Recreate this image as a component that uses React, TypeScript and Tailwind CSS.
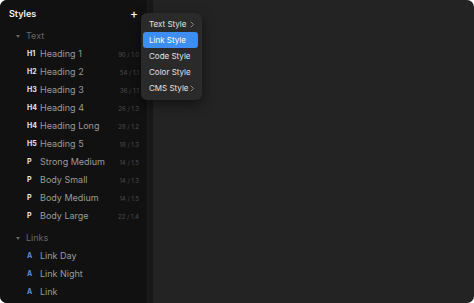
import React from 'react';

type StyleRow = { tag: string; name: string; meta?: string };

const textStyles: StyleRow[] = [
    { tag: 'H1', name: 'Heading 1', meta: '90 / 1.0' },
    { tag: 'H2', name: 'Heading 2', meta: '54 / 1.1' },
    { tag: 'H3', name: 'Heading 3', meta: '36 / 1.1' },
    { tag: 'H4', name: 'Heading 4', meta: '26 / 1.3' },
    { tag: 'H4', name: 'Heading Long', meta: '28 / 1.2' },
    { tag: 'H5', name: 'Heading 5', meta: '18 / 1.3' },
    { tag: 'P', name: 'Strong Medium', meta: '14 / 1.5' },
    { tag: 'P', name: 'Body Small', meta: '14 / 1.3' },
    { tag: 'P', name: 'Body Medium', meta: '14 / 1.5' },
    { tag: 'P', name: 'Body Large', meta: '22 / 1.4' },
];

const linkStyles: StyleRow[] = [
    { tag: 'A', name: 'Link Day' },
    { tag: 'A', name: 'Link Night' },
    { tag: 'A', name: 'Link' },
];

const menuItems = [
    { label: 'Text Style', sub: true },
    { label: 'Link Style', active: true },
    { label: 'Code Style' },
    { label: 'Color Style' },
    { label: 'CMS Style', sub: true },
];

function Chevron() {
    return (
        <svg width="6" height="7" viewBox="0 0 6 7" fill="none">
            <path d="M2 1l2.5 2.5L2 6" stroke="#8a8a8a" strokeWidth="1" strokeLinecap="round" />
        </svg>
    );
}

function SectionHeader({ label }: { label: string }) {
    return (
        <div className="flex h-[18px] items-center gap-[6px] pl-[16px]">
            <span className="h-0 w-0 border-x-[2px] border-t-[3px] border-x-transparent border-t-[#666]" />
            <span className="text-[9px] text-[#666]">{label}</span>
        </div>
    );
}

function Row({ row, link }: { row: StyleRow; link?: boolean }) {
    return (
        <div className="flex h-[18px] items-center pl-[27px] pr-[8px]">
            <span
                className={`w-[13px] text-[7px] font-bold ${link ? 'text-[#5b8fd6]' : 'text-[#e8e8e8]'}`}
            >
                {row.tag}
            </span>
            <span className="flex-1 text-[9px] text-[#9a9a9a]">{row.name}</span>
            {row.meta && <span className="text-[6px] text-[#4c4c4c]">{row.meta}</span>}
        </div>
    );
}

export default function App() {
    return (
        <div className="h-[303px] w-[474px] bg-white" style={{ fontFamily: 'Inter, "Noto Sans", sans-serif' }}>
            <div className="relative flex h-full w-full overflow-hidden rounded-[7px] bg-[#232323]">
                <aside className="flex w-[147px] flex-col bg-[#111111]">
                    <div className="flex h-[27px] items-center justify-between pl-[9px] pr-[9px]">
                        <span className="text-[9px] font-semibold text-[#f2f2f2]">Styles</span>
                        <span className="text-[12px] font-medium leading-none text-white">+</span>
                    </div>
                    <SectionHeader label="Text" />
                    {textStyles.map((r, i) => (
                        <Row key={i} row={r} />
                    ))}
                    <div className="h-[4px]" />
                    <SectionHeader label="Links" />
                    {linkStyles.map((r, i) => (
                        <Row key={i} row={r} link />
                    ))}
                </aside>
                <div className="w-[6px] border-l border-[#1c1c1c] bg-[#181818]" />
                <main className="flex-1" />

                <div className="absolute left-[141px] top-[13px] flex w-[61px] flex-col rounded-[6px] bg-[#2a2a2a] pb-[4px] pl-[2px] pr-[4px] pt-[3px] shadow-[0_4px_12px_rgba(0,0,0,0.5)]">
                    {menuItems.map((m) => (
                        <div
                            key={m.label}
                            className={`flex h-[16px] items-center justify-between whitespace-nowrap rounded-[3px] pl-[6px] pr-[3px] text-[8px] ${
                                m.active ? 'bg-[#3d8ef0] text-white' : 'text-[#e4e4e4]'
                            }`}
                        >
                            <span>{m.label}</span>
                            {m.sub && <Chevron />}
                        </div>
                    ))}
                </div>
            </div>
        </div>
    );
}
